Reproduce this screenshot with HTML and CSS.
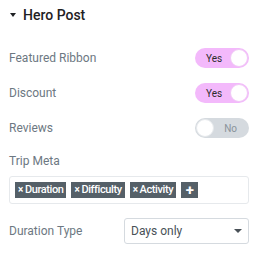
FILE: index.html
```html
<!DOCTYPE html>
<html>
<head>
<meta charset="utf-8">
<link rel="stylesheet" href="styles.css">
</head>
<body>
<div class="panel">
  <div class="section-head">
    <span class="caret"></span>
    <span class="title">Hero Post</span>
  </div>
  <div class="controls">
    <div class="row">
      <span class="label">Featured Ribbon</span>
      <span class="switch on"><span class="txt">Yes</span><span class="knob"></span></span>
    </div>
    <div class="row">
      <span class="label">Discount</span>
      <span class="switch on"><span class="txt">Yes</span><span class="knob"></span></span>
    </div>
    <div class="row">
      <span class="label">Reviews</span>
      <span class="switch off"><span class="knob"></span><span class="txt">No</span></span>
    </div>
    <div class="meta">
      <span class="label">Trip Meta</span>
      <div class="tagbox">
        <span class="tag"><span class="x">×</span>Duration</span>
        <span class="tag"><span class="x">×</span>Difficulty</span>
        <span class="tag"><span class="x">×</span>Activity</span>
        <span class="tag plus">+</span>
      </div>
    </div>
    <div class="row select-row">
      <span class="label">Duration Type</span>
      <div class="select"><span>Days only</span><span class="arrow"></span></div>
    </div>
  </div>
</div>
</body>
</html>
```
FILE: styles.css
```css
html, body { margin: 0; padding: 0; background: #fff; }
body { font-family: Roboto, "Liberation Sans", sans-serif; }
.panel { width: 263px; padding: 0 14px 0 9px; box-sizing: border-box; }
.section-head { height: 30px; display: flex; align-items: center; gap: 7px; padding-left: 1px; }
.caret { width: 0; height: 0; border-left: 3.5px solid transparent; border-right: 3.5px solid transparent; border-top: 4px solid #1f2124; margin-top: -1px; }
.title { font-size: 14px; font-weight: 500; color: #1f2124; }
.controls { display: flex; flex-direction: column; padding-top: 18px; }
.row { display: flex; align-items: center; justify-content: space-between; height: 20px; margin-bottom: 15px; }
.label { font-size: 12px; color: #6d7882; }
.switch { width: 54px; height: 20px; border-radius: 10px; display: flex; align-items: center; box-sizing: border-box; padding: 1px; }
.switch.on { background: #f3b9fb; justify-content: space-between; }
.switch.off { background: #d5dadf; justify-content: space-between; }
.knob { width: 18px; height: 18px; border-radius: 50%; background: #fff; box-sizing: border-box; }
.switch.on .knob { border: 1px solid #f0c8f6; }
.switch.off .knob { border: 1px solid #e6e9ec; }
.txt { font-size: 10px; }
.switch.on .txt { color: #2c2c2c; padding-left: 10px; }
.switch.off .txt { color: #8a939b; padding-right: 11px; }
.meta { display: flex; flex-direction: column; margin-top: 1px; }
.meta .label { line-height: 14px; }
.tagbox { margin-top: 8px; height: 28px; border: 1px solid #e6e9ec; border-radius: 3px; box-sizing: border-box; display: flex; align-items: center; gap: 5px; padding-left: 5px; }
.tag { background: #556068; color: #fff; font-size: 11px; font-weight: 500; height: 16px; line-height: 16px; padding: 0 3px 0 3px; display: flex; align-items: center; letter-spacing: -0.4px; }
.tag .x { font-size: 10px; font-weight: 700; margin-right: 2px; }
.tag.plus { font-size: 15px; font-weight: 700; padding: 0; width: 17px; box-sizing: border-box; justify-content: center; }
.select-row { height: 26px; margin-top: 14px; }
.select { width: 125px; height: 26px; border: 1px solid #d5dadf; border-radius: 3px; box-sizing: border-box; display: flex; align-items: center; justify-content: space-between; padding: 0 6px 0 6px; font-size: 12px; color: #495157; }
.arrow { width: 0; height: 0; border-left: 4px solid transparent; border-right: 4px solid transparent; border-top: 4px solid #495157; }
```
